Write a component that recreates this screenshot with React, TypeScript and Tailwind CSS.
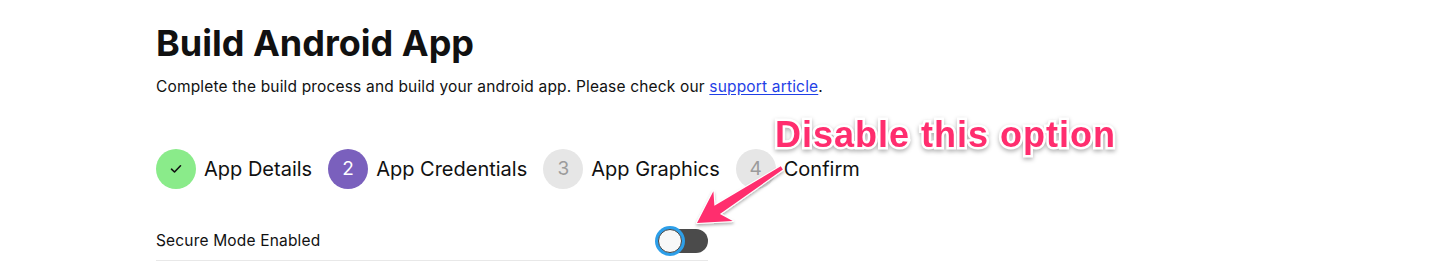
import React from "react";

type Step = {
  num: string;
  label: string;
  state: "done" | "active" | "todo";
};

const steps: Step[] = [
  { num: "1", label: "App Details", state: "done" },
  { num: "2", label: "App Credentials", state: "active" },
  { num: "3", label: "App Graphics", state: "todo" },
  { num: "4", label: "Confirm", state: "todo" },
];

function StepCircle({ step }: { step: Step }) {
  if (step.state === "done") {
    return (
      <div className="w-[40px] h-[40px] rounded-full bg-[#8aeb8a] flex items-center justify-center">
        <svg width="12" height="10" viewBox="0 0 12 10" fill="none">
          <path d="M1.5 5.2 L4.5 8 L10.5 1.8" stroke="#111" strokeWidth="1.6" strokeLinecap="round" strokeLinejoin="round" />
        </svg>
      </div>
    );
  }
  return (
    <div
      className={`w-[40px] h-[40px] rounded-full flex items-center justify-center text-[19px] ${
        step.state === "active" ? "bg-[#7a60bd] text-white" : "bg-[#e6e6e6] text-[#9b9b9b]"
      }`}
    >
      {step.num}
    </div>
  );
}

export default function App() {
  return (
    <div className="relative w-[1440px] h-[273px] bg-white overflow-hidden font-['Inter',sans-serif] text-[#111]">
      <div className="flex flex-col pl-[156px] pt-[17px]">
        <h1 className="text-[36px] leading-[52px] font-bold">Build Android App</h1>
        <p className="mt-[6px] text-[15.5px] leading-[24px] tracking-[0.17px]">
          Complete the build process and build your android app. Please check our{" "}
          <a href="#" className="text-[#1f3fe6] underline underline-offset-2">
            support article
          </a>
          .
        </p>

        {/* steps */}
        <div className="mt-[50px] flex items-center h-[40px]">
          {steps.map((s, i) => (
            <div key={s.num} className={`flex items-center gap-[8px] ${i > 0 ? "ml-[16px]" : ""}`}>
              <StepCircle step={s} />
              <span className="text-[20px]">{s.label}</span>
            </div>
          ))}
        </div>

        <div className="mt-[32px] w-[552px] h-[40px] flex items-center justify-between border-b border-[#e8e8e8]">
          <span className="text-[15.5px] tracking-[0.17px]">Secure Mode Enabled</span>
          <div className="relative w-[48px] h-[24px] rounded-full bg-[#4b4b4b]">
            <div className="absolute -left-[2px] top-0 w-[24px] h-[24px] rounded-full bg-[#f8f8f8] border-[1.5px] border-[#444] ring-[3px] ring-[#2d9fe9]" />
          </div>
        </div>
      </div>

      {/* annotation */}
      <div className="absolute left-[775px] top-[117px] text-[36px] leading-[36px] tracking-[1px] font-bold font-['Liberation_Sans',sans-serif] text-[#ff2d6e] [paint-order:stroke_fill] [-webkit-text-stroke:5px_white] drop-shadow-[0_2px_2px_rgba(0,0,0,0.3)] whitespace-nowrap">
        Disable this option
      </div>
      <svg className="absolute inset-0 pointer-events-none" width="1440" height="273" viewBox="0 0 1440 273">
        <defs>
          <filter id="sh" x="-20%" y="-20%" width="140%" height="140%">
            <feDropShadow dx="0" dy="2" stdDeviation="1.5" floodColor="#000" floodOpacity="0.3" />
          </filter>
        </defs>
        <polygon
          points="697,223 713.4,191.2 714.4,205.7 780.8,166.3 782.9,169.6 719.9,214.1 732.7,221"
          fill="#ff2d6e"
          stroke="white"
          strokeWidth="2"
          strokeLinejoin="round"
          paintOrder="stroke"
          filter="url(#sh)"
        />
      </svg>
    </div>
  );
}
